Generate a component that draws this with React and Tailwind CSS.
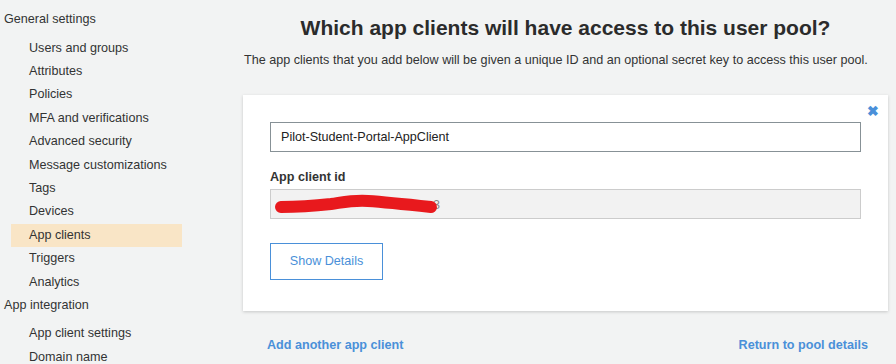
import React from "react";

const generalItems = [
  "Users and groups",
  "Attributes",
  "Policies",
  "MFA and verifications",
  "Advanced security",
  "Message customizations",
  "Tags",
  "Devices",
  "App clients",
  "Triggers",
  "Analytics",
];

const integrationItems = ["App client settings", "Domain name"];

const NavItem = ({ label, active }) => (
  <div
    className={`ml-[11px] w-[171px] h-[23.4px] flex items-center pl-[18px] ${
      active ? "bg-[#f9e5c6]" : ""
    }`}
  >
    {label}
  </div>
);

const Sidebar = () => (
  <div className="w-[243px] shrink-0 pt-[8px] text-[12.6px] text-[#333]">
    <div className="h-[23.4px] flex items-center pl-[4px]">General settings</div>
    <div className="mt-[5px]">
      {generalItems.map((item) => (
        <NavItem key={item} label={item} active={item === "App clients"} />
      ))}
    </div>
    <div className="h-[23.4px] flex items-center pl-[4px]">App integration</div>
    <div className="mt-[5px]">
      {integrationItems.map((item) => (
        <NavItem key={item} label={item} />
      ))}
    </div>
  </div>
);

export default function App() {
  return (
    <div
      className="w-[896px] h-[364px] overflow-hidden bg-[#f2f3f3] flex"
      style={{ fontFamily: '"Liberation Sans", Arial, sans-serif' }}
    >
      <Sidebar />

      <div className="w-[645px] shrink-0 pt-[14px] text-[#333]">
        <h1 className="text-[21px] leading-[28px] font-bold text-center text-[#2b2b2b]">
          Which app clients will have access to this user pool?
        </h1>
        <p className="mt-[8px] text-[12.6px] leading-[20px] pl-[1px] text-[#333]">
          The app clients that you add below will be given a unique ID and an optional secret key to access this user pool.
        </p>

        <div className="relative mt-[25px] bg-white shadow-[0_1px_3px_rgba(0,0,0,0.18)] pt-[27px] px-[27px] pb-[31px]">
          <button className="absolute top-[9px] right-[9px] text-[#4a90d9] text-[14px] font-bold leading-none">
            ✖
          </button>

          <div className="h-[30px] border border-[#879196] flex items-center px-[10px] text-[12.6px] text-[#222]">
            Pilot-Student-Portal-AppClient
          </div>

          <div className="mt-[15px] text-[12.6px] leading-[20px] font-bold text-[#333]">
            App client id
          </div>

          <div className="relative mt-[2px] h-[30px] border border-[#ccc] bg-[#f2f2f2] flex items-center px-[8px] text-[12.6px] text-[#888]">
            <span className="flex-1">g</span>
            <span className="absolute left-[162px] top-[6px]">3</span>
            <svg className="absolute left-[2px] top-[4px]" width="170" height="22" viewBox="0 0 170 22">
              <path
                d="M8 13 C 25 13, 40 12, 58 10 C 72 8, 80 6, 95 7 C 110 8, 130 10, 158 13"
                stroke="#e8191d"
                strokeWidth="12"
                strokeLinecap="round"
                fill="none"
              />
            </svg>
          </div>

          <button className="mt-[24px] w-[113px] h-[37px] border border-[#4a90d9] text-[#4a90d9] text-[12.6px] bg-white">
            Show Details
          </button>
        </div>

        <div className="mt-[24px] flex justify-between pl-[24px] pr-[20px] text-[12.6px] leading-[20px] font-bold text-[#4a90d9]">
          <a href="#">Add another app client</a>
          <a href="#">Return to pool details</a>
        </div>
      </div>
    </div>
  );
}
